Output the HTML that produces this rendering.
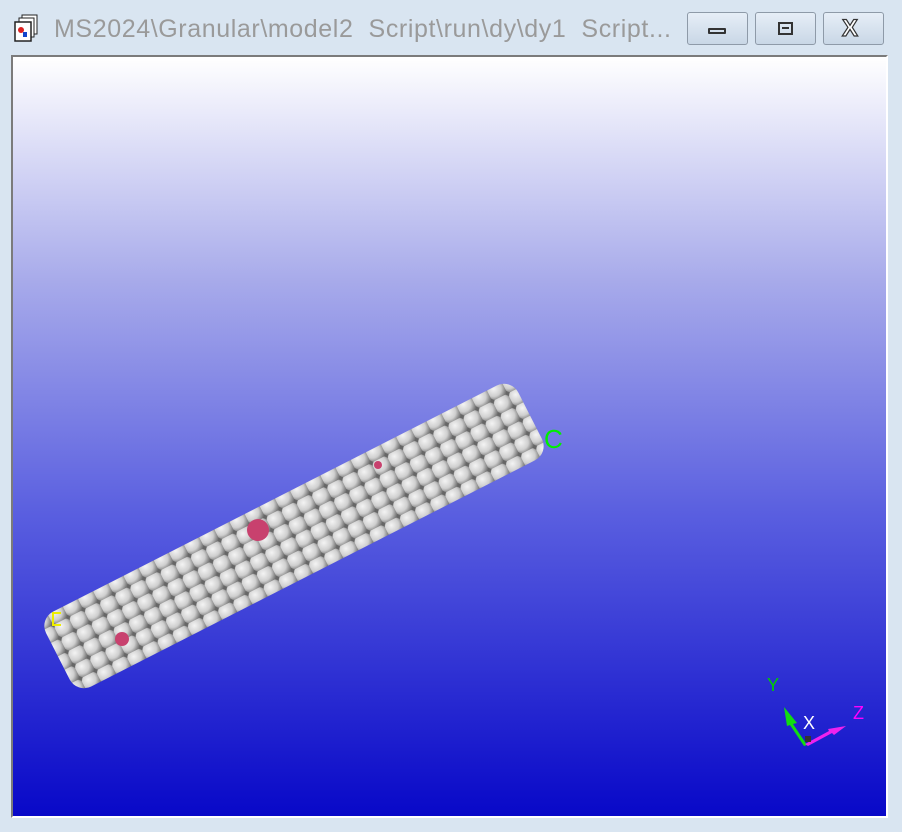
<!DOCTYPE html>
<html><head><style>
html,body{margin:0;padding:0;}
body{width:902px;height:832px;background:#d9e5f1;position:relative;overflow:hidden;font-family:"Liberation Sans",sans-serif;}
.title{position:absolute;left:54px;top:15px;font-size:25px;color:#9a9a9a;letter-spacing:0.6px;white-space:nowrap;}
.btn{position:absolute;top:12px;width:61px;height:33px;box-sizing:border-box;border:1px solid #8e9aa8;border-radius:3px;background:linear-gradient(#e6eef7,#c9d7e6);}
.view{position:absolute;left:11px;top:55px;width:877px;height:763px;box-sizing:border-box;border:2px solid #7b7b7b;border-right-color:#fff;border-bottom-color:#fff;background:linear-gradient(#ffffff 0%,#a6a9ea 30%,#5a5fe0 60%,#0808c8 100%);}
</style></head><body>
<svg style="position:absolute;left:14px;top:14px" width="30" height="30">
<rect x="8" y="1" width="15" height="19" fill="#fff" stroke="#222"/>
<rect x="5" y="4" width="15" height="19" fill="#fff" stroke="#222"/>
<rect x="1" y="8" width="16" height="19" fill="#fff" stroke="#222" stroke-width="1.5"/>
<circle cx="7" cy="16" r="3" fill="#d22"/><rect x="9" y="18" width="4" height="5" fill="#14c"/>
</svg>
<div class="title">MS2024\Granular\model2&nbsp; Script\run\dy\dy1&nbsp; Script...</div>
<div class="btn" style="left:687px"><div style="position:absolute;left:20px;top:15px;width:18px;height:6px;border:2px solid #333;box-sizing:border-box;border-radius:1px"></div></div>
<div class="btn" style="left:755px"><div style="position:absolute;left:22px;top:9px;width:15px;height:13px;border:2px solid #333;box-sizing:border-box;"><div style="margin:3px 2px;height:2px;background:#333"></div></div></div>
<div class="btn" style="left:823px"><div style="position:absolute;left:18px;top:2px;font-size:24px;font-weight:bold;color:#fff;-webkit-text-stroke:1.2px #333">X</div></div>
<div class="view"></div>
<svg style="position:absolute;left:0;top:0" width="902" height="832">
<defs>
<radialGradient id="g" cx="0.4" cy="0.35" r="0.65"><stop offset="0" stop-color="#f4f4f4"/><stop offset="0.6" stop-color="#cfcfcf"/><stop offset="1" stop-color="#777"/></radialGradient>
<pattern id="p" width="17" height="15" patternUnits="userSpaceOnUse"><rect width="17" height="15" fill="#666"/><circle cx="8.5" cy="7.5" r="9.5" fill="url(#g)"/></pattern>
</defs>
<g transform="translate(294,536) rotate(-27)">
<rect x="-265" y="-42" width="530" height="84" rx="16" fill="url(#p)"/>
</g>
<circle cx="258" cy="530" r="11" fill="#c8416e"/>
<circle cx="122" cy="639" r="7" fill="#c8416e"/>
<circle cx="378" cy="465" r="4" fill="#c8416e"/>
<path d="M61 613h-8v12h8" stroke="#ee0" stroke-width="2" fill="none"/>
<text x="544" y="448" font-size="26" fill="#0e0" font-family="Liberation Sans">C</text>
<text x="767" y="691" font-size="18" fill="#0c0" font-family="Liberation Sans">Y</text>
<text x="853" y="719" font-size="18" fill="#f0f" font-family="Liberation Sans">Z</text>
<text x="803" y="729" font-size="18" fill="#fff" font-family="Liberation Sans">X</text>
<polygon points="784,707 797,723 793,724 807,745 804,746 790,725 787,726" fill="#1d1"/>
<polygon points="846,726 834,735 832,733 808,746 805,744 829,731 828,729" fill="#e2e"/>
<rect x="805" y="736" width="6" height="6" fill="#333"/>
</svg>
</body></html>
